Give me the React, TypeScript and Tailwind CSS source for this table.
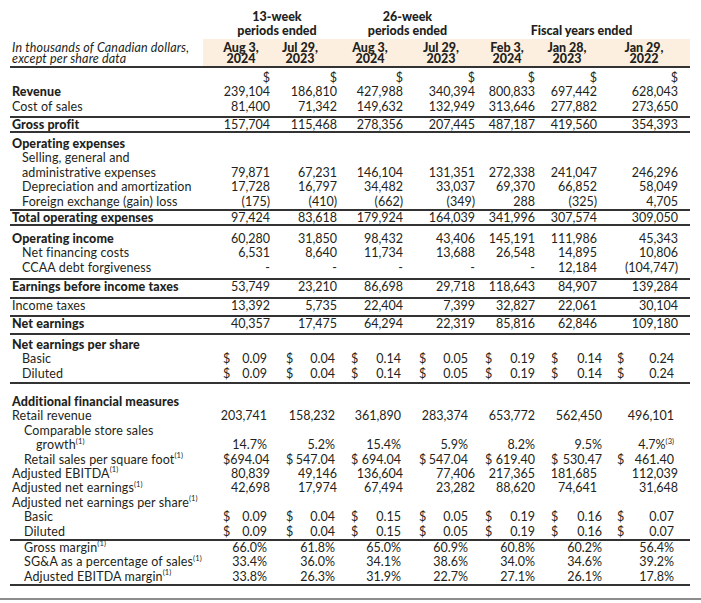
import React from 'react';

const W = ['w-[67px]', 'w-[67px]', 'w-[66px]', 'w-[72px]', 'w-[60px]', 'w-[62px]', 'w-[81px]'];
const DPL = ['pl-[20px]', 'pl-[16px]', 'pl-[14px]', 'pl-[16px]', 'pl-[10px]', 'pl-[16px]', 'pl-[20px]'];
const ALT = ['mr-[3px]', 'mr-[2px]', 'mr-[2px]', 'mr-[7px]', 'mr-0', '-mr-[5px]', 'mr-[4px]'];
const HDR = ['pl-[9px]', 'pr-[7px]', '', 'pl-[4px]', 'pl-[4px]', 'pl-[2px]', 'pl-[13px]'];

type Kind = 'num' | 'alt' | 'dollar';

const Sup = ({ n }: { n: string }) => <sup className="text-[7.5px] top-[-0.75em]">({n})</sup>;

function Row({
  label,
  values,
  kind = 'num',
  indent = 'pl-[2px]',
  bold = false,
  h = 'h-[14.4px] leading-[14.4px]',
  mt = '',
}: {
  label: React.ReactNode;
  values?: React.ReactNode[];
  kind?: Kind;
  indent?: string;
  bold?: boolean;
  h?: string;
  mt?: string;
}) {
  return (
    <div className={`flex ${h} ${mt}`}>
      <div
        className={`w-[193px] shrink-0 whitespace-nowrap ${indent} ${
          bold ? 'font-black tracking-[0.1px]' : 'tracking-[0.12px]'
        }`}
      >
        {label}
      </div>
      {values &&
        values.map((v, i) =>
          kind === 'dollar' ? (
            <div key={i} className={`${W[i]} shrink-0 flex justify-between whitespace-nowrap ${DPL[i]}`}>
              <span>$</span>
              <span className={ALT[i]}>{v}</span>
            </div>
          ) : (
            <div key={i} className={`${W[i]} shrink-0 flex justify-end whitespace-nowrap`}>
              <span className={kind === 'alt' ? ALT[i] : ''}>{v}</span>
            </div>
          )
        )}
    </div>
  );
}

const Line = ({ mt = '' }: { mt?: string }) => <div className={`h-[2px] bg-[#333333] ${mt}`} />;

export default function App() {
  return (
    <div className="w-[701px] h-[603px] bg-white overflow-hidden font-['Lato','Open_Sans',sans-serif] text-[12.5px] text-[#231f20]">
      <div className="ml-[10px] w-[680px]">
        {/* group headers */}
        <div className="flex h-[39px] items-end pb-[2px] font-black text-[12.5px] leading-[13.5px]">
          <div className="w-[193px] shrink-0" />
          <div className="w-[134px] shrink-0 text-center pl-[14px]">
            13-week
            <br />
            periods ended
          </div>
          <div className="w-[138px] shrink-0 text-center pl-[3px]">
            26-week
            <br />
            periods ended
          </div>
          <div className="w-[203px] shrink-0 text-center pl-[10px]">Fiscal years ended</div>
        </div>
        {/* date header */}
        <div className="flex h-[27px] leading-[11.5px]">
          <div className="w-[193px] shrink-0 pl-[2px] pt-[2.5px] italic tracking-[0.15px]">
            In thousands of Canadian dollars,
            <br />
            except per share data
          </div>
          <div className="flex flex-1 bg-[#fcefdf] pt-[2.5px] font-black">
            {[
              ['Aug 3,', '2024'],
              ['Jul 29,', '2023'],
              ['Aug 3,', '2024'],
              ['Jul 29,', '2023'],
              ['Feb 3,', '2024'],
              ['Jan 28,', '2023'],
              ['Jan 29,', '2022'],
            ].map((d, i) => (
              <div key={i} className={`${W[i]} shrink-0 text-center ${HDR[i]}`}>
                {d[0]}
                <br />
                {d[1]}
              </div>
            ))}
          </div>
        </div>
        <Line />

        <Row label="" values={['$', '$', '$', '$', '$', '$', '$']} mt="mt-[3px]" />
        <Row label="Revenue" bold values={['239,104', '186,810', '427,988', '340,394', '800,833', '697,442', '628,043']} />
        <Row label="Cost of sales" values={['81,400', '71,342', '149,632', '132,949', '313,646', '277,882', '273,650']} />
        <Line mt="mt-[1.8px]" />
        <Row label="Gross profit" bold h="h-[13px] leading-[13px]" values={['157,704', '115,468', '278,356', '207,445', '487,187', '419,560', '354,393']} />
        <Line />

        <Row label="Operating expenses" bold mt="mt-[4px]" />
        <Row label="Selling, general and" indent="pl-[12px]" />
        <Row label="administrative expenses" indent="pl-[12px]" values={['79,871', '67,231', '146,104', '131,351', '272,338', '241,047', '246,296']} />
        <Row label="Depreciation and amortization" indent="pl-[12px]" values={['17,728', '16,797', '34,482', '33,037', '69,370', '66,852', '58,049']} />
        <Row label="Foreign exchange (gain) loss" indent="pl-[12px]" values={['(175)', '(410)', '(662)', '(349)', '288', '(325)', '4,705']} />
        <Line />
        <Row label="Total operating expenses" bold h="h-[13px] leading-[13px]" values={['97,424', '83,618', '179,924', '164,039', '341,996', '307,574', '309,050']} />
        <Line />

        <Row label="Operating income" bold mt="mt-[6px]" values={['60,280', '31,850', '98,432', '43,406', '145,191', '111,986', '45,343']} />
        <Row label="Net financing costs" indent="pl-[12px]" values={['6,531', '8,640', '11,734', '13,688', '26,548', '14,895', '10,806']} />
        <Row label="CCAA debt forgiveness" indent="pl-[12px]" values={['-', '-', '-', '-', '-', '12,184', '(104,747)']} />
        <Line mt="mt-[3px]" />
        <Row label="Earnings before income taxes" bold values={['53,749', '23,210', '86,698', '29,718', '118,643', '84,907', '139,284']} />
        <Line mt="mt-[2.6px]" />
        <Row label="Income taxes" values={['13,392', '5,735', '22,404', '7,399', '32,827', '22,061', '30,104']} />
        <Line mt="mt-[1.6px]" />
        <Row label="Net earnings" bold values={['40,357', '17,475', '64,294', '22,319', '85,816', '62,846', '109,180']} />
        <Line mt="mt-[1.6px]" />

        <Row label="Net earnings per share" bold mt="mt-[3px]" />
        <Row label="Basic" indent="pl-[12px]" kind="dollar" values={['0.09', '0.04', '0.14', '0.05', '0.19', '0.14', '0.24']} />
        <Row label="Diluted" indent="pl-[12px]" kind="dollar" values={['0.09', '0.04', '0.14', '0.05', '0.19', '0.14', '0.24']} />
        <Line mt="mt-[0.8px]" />

        <Row label="Additional financial measures" bold mt="mt-[11px]" />
        <Row label="Retail revenue" kind="alt" values={['203,741', '158,232', '361,890', '283,374', '653,772', '562,450', '496,101']} />
        <Row label="Comparable store sales" indent="pl-[14px]" />
        <Row
          label={
            <>
              growth
              <Sup n="1" />
            </>
          }
          indent="pl-[26px]"
          kind="alt"
          values={[
            '14.7%',
            '5.2%',
            '15.4%',
            '5.9%',
            '8.2%',
            '9.5%',
            <span key="g">
              4.7%
              <Sup n="3" />
            </span>,
          ]}
        />
        <Row
          label={
            <>
              Retail sales per square foot
              <Sup n="1" />
            </>
          }
          indent="pl-[14px]"
          kind="dollar"
          values={['694.04', '547.04', '694.04', '547.04', '619.40', '530.47', '461.40']}
        />
        <Row
          label={
            <>
              Adjusted EBITDA
              <Sup n="1" />
            </>
          }
          values={['80,839', '49,146', '136,604', '77,406', '217,365', '181,685', '112,039']}
        />
        <Row
          label={
            <>
              Adjusted net earnings
              <Sup n="1" />
            </>
          }
          values={['42,698', '17,974', '67,494', '23,282', '88,620', '74,641', '31,648']}
        />
        <Row
          label={
            <>
              Adjusted net earnings per share
              <Sup n="1" />
            </>
          }
        />
        <Row label="Basic" indent="pl-[14px]" kind="dollar" values={['0.09', '0.04', '0.15', '0.05', '0.19', '0.16', '0.07']} />
        <Row label="Diluted" indent="pl-[14px]" kind="dollar" values={['0.09', '0.04', '0.15', '0.05', '0.19', '0.16', '0.07']} />
        <Line />
        <Row
          label={
            <>
              Gross margin
              <Sup n="1" />
            </>
          }
          indent="pl-[14px]"
          kind="alt"
          values={['66.0%', '61.8%', '65.0%', '60.9%', '60.8%', '60.2%', '56.4%']}
        />
        <Row
          label={
            <>
              SG&amp;A as a percentage of sales
              <Sup n="1" />
            </>
          }
          indent="pl-[14px]"
          kind="alt"
          values={['33.4%', '36.0%', '34.1%', '38.6%', '34.0%', '34.6%', '39.2%']}
        />
        <Row
          label={
            <>
              Adjusted EBITDA margin
              <Sup n="1" />
            </>
          }
          indent="pl-[14px]"
          kind="alt"
          values={['33.8%', '26.3%', '31.9%', '22.7%', '27.1%', '26.1%', '17.8%']}
        />
        <Line />
      </div>
      <div className="mt-[12px] h-[2px] bg-[#8c8c8c]" />
    </div>
  );
}
